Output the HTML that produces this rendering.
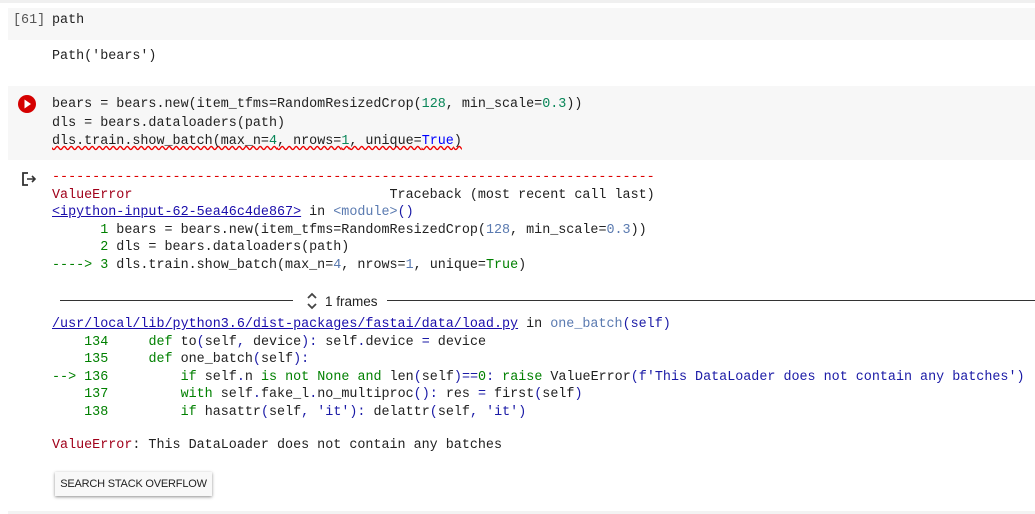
<!DOCTYPE html>
<html><head><meta charset="utf-8"><style>
body{margin:0;width:1035px;height:514px;background:#fff;position:relative;overflow:hidden;font-family:"Liberation Mono",monospace;font-size:13.4px;color:#212121}
.a{position:absolute;white-space:pre;line-height:17px}
.cell{position:absolute;left:8px;right:0;background:#f7f7f7}
.g{color:#008000}.r{color:#a0001a}.b{color:#1a1aa6}.t{color:#098658}.lk{color:#1a0dab;text-decoration:underline}
.sq{text-decoration:underline wavy #e00;text-decoration-skip-ink:none}
.gr{color:#5a7ab0}
</style></head><body>
<div style="position:absolute;left:0;right:0;top:0;height:3px;background:#f0f0f0"></div>
<div class="cell" style="top:8px;height:32px"></div>
<div class="a" style="left:13px;top:12px;color:#555">[61]</div>
<div class="a" style="left:52px;top:12px">path</div>
<div class="a" style="left:52px;top:48px">Path('bears')</div>

<div class="cell" style="top:86px;height:74px"></div>
<svg style="position:absolute;left:17px;top:94px" width="20" height="20"><circle cx="10" cy="10" r="9" fill="#d50000"/><path d="M7.5 5.5 L14 10 L7.5 14.5Z" fill="#fff"/></svg>
<div class="a" style="left:52px;top:96px;line-height:18.5px">bears = bears.new(item_tfms=RandomResizedCrop(<span class="t">128</span>, min_scale=<span class="t">0.3</span>))
dls = bears.dataloaders(path)
<span class="sq">dls.train.show_batch(max_n=<span class="t">4</span>, nrows=<span class="t">1</span>, unique=<span style="color:#0000ff">True</span>)</span></div>

<svg style="position:absolute;left:21px;top:171px" width="16" height="16"><path d="M7 2H2v12h5" fill="none" stroke="#333" stroke-width="1.8"/><path d="M6 8h8M11 5l3 3-3 3" fill="none" stroke="#333" stroke-width="1.6"/></svg>
<div class="a" style="left:52px;top:169px;line-height:17.6px"><span style="color:#d00">---------------------------------------------------------------------------</span>
<span class="r">ValueError</span>                                Traceback (most recent call last)
<span class="lk">&lt;ipython-input-62-5ea46c4de867&gt;</span> in <span class="gr">&lt;module&gt;</span><span class="b">()</span>
<span class="g">      1</span> bears = bears.new(item_tfms=RandomResizedCrop(<span class="gr">128</span>, min_scale=<span class="gr">0.3</span>))
<span class="g">      2</span> dls = bears.dataloaders(path)
<span class="g">----&gt; 3</span> dls.train.show_batch(max_n=<span class="gr">4</span>, nrows=<span class="gr">1</span>, unique=<span class="g">True</span>)</div>

<div style="position:absolute;left:60px;top:300px;width:233px;border-top:1px solid #333"></div>
<div style="position:absolute;left:387px;top:300px;right:0;border-top:1px solid #333"></div>
<svg style="position:absolute;left:306px;top:292px" width="12" height="18"><path d="M2 6l4-4 4 4M2 12l4 4 4-4" fill="none" stroke="#444" stroke-width="1.8"/></svg>
<div class="a" style="left:325px;top:293px;font-family:'Liberation Sans',sans-serif;font-size:13.5px">1 frames</div>

<div class="a" style="left:52px;top:316px;line-height:17.5px"><span class="lk">/usr/local/lib/python3.6/dist-packages/fastai/data/load.py</span> in <span class="gr">one_batch</span><span class="b">(self)</span>
<span class="g">    134</span>     <span class="g">def</span> to<span class="b">(</span>self<span class="b">,</span> device<span class="b">):</span> self<span class="b">.</span>device <span class="b">=</span> device
<span class="g">    135</span>     <span class="g">def</span> one_batch<span class="b">(</span>self<span class="b">):</span>
<span class="g">--&gt; 136</span>         <span class="g">if</span> self<span class="b">.</span>n <span class="g">is</span> <span class="g">not</span> <span class="g">None</span> <span class="g">and</span> len<span class="b">(</span>self<span class="b">)==</span><span class="g">0</span><span class="b">:</span> <span class="g">raise</span> ValueError<span class="b">(f'This DataLoader does not contain any batches')</span>
<span class="g">    137</span>         <span class="g">with</span> self<span class="b">.</span>fake_l<span class="b">.</span>no_multiproc<span class="b">():</span> res <span class="b">=</span> first<span class="b">(</span>self<span class="b">)</span>
<span class="g">    138</span>         <span class="g">if</span> hasattr<span class="b">(</span>self<span class="b">,</span> <span class="b">'it'):</span> delattr<span class="b">(</span>self<span class="b">,</span> <span class="b">'it')</span></div>

<div class="a" style="left:52px;top:437px"><span class="r">ValueError</span>: This DataLoader does not contain any batches</div>

<div style="position:absolute;left:55px;top:472px;width:157px;height:24px;background:#f8f8f8;box-shadow:0 1px 3px rgba(0,0,0,.45);font-family:'Liberation Sans',sans-serif;font-size:11px;line-height:24px;text-align:center;color:#222;white-space:nowrap;letter-spacing:-0.2px">SEARCH STACK OVERFLOW</div>
<div style="position:absolute;left:8px;right:0;top:511px;height:3px;background:#f3f3f3"></div>
</body></html>
